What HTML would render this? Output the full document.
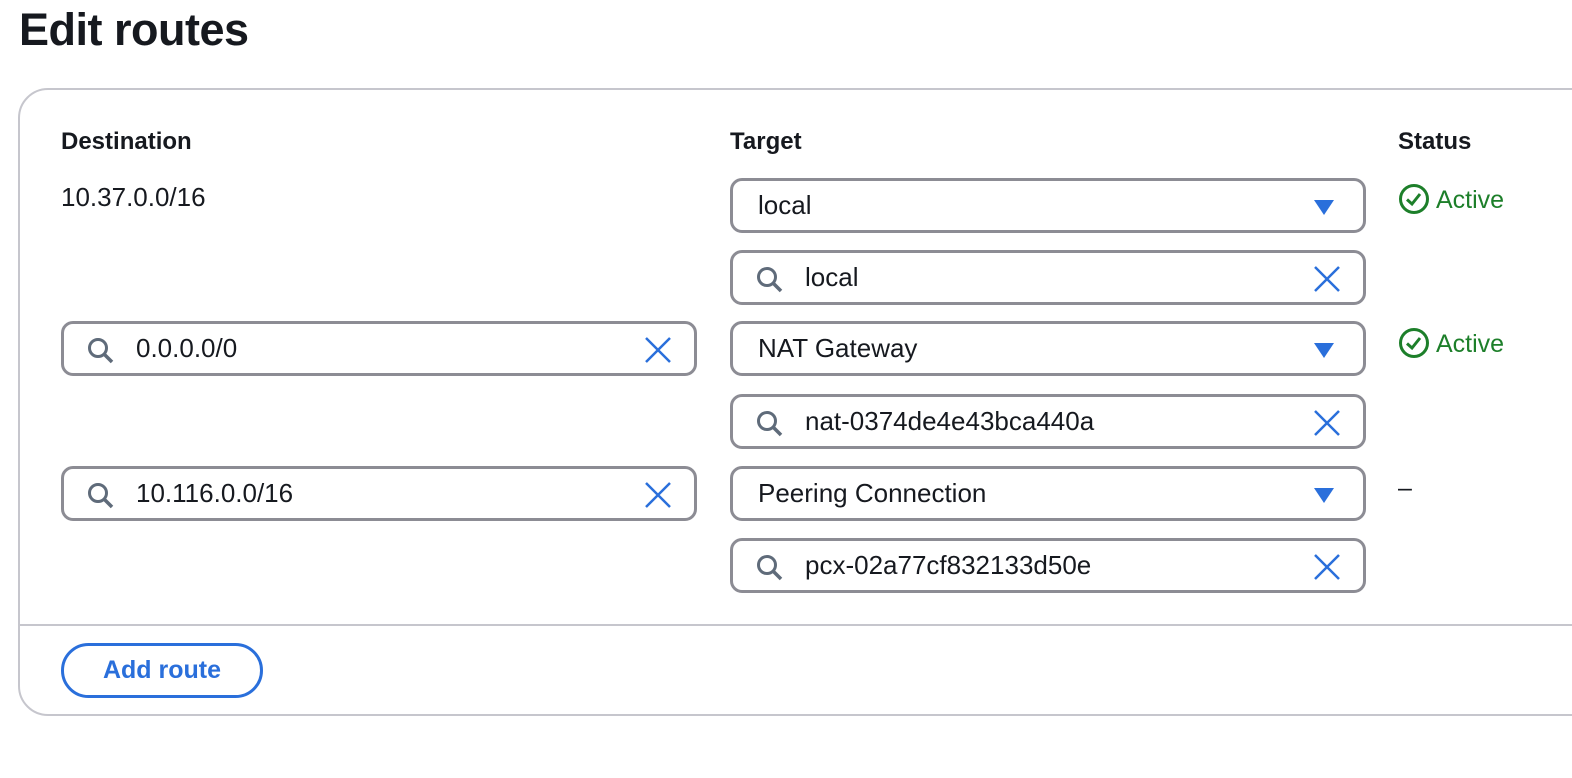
<!DOCTYPE html><html><head><style>
body{margin:0;width:1572px;height:778px;background:#fff;font-family:"Liberation Sans",sans-serif;color:#16191f;position:relative;overflow:hidden}
.a{position:absolute}
h1{position:absolute;left:19px;top:4px;margin:0;font-size:45px;font-weight:bold;letter-spacing:-0.5px}
.card{left:18px;top:88px;width:1600px;height:628px;border:2px solid #c6c6cd;border-radius:30px;box-sizing:border-box}
.div{left:19px;top:624px;width:1560px;height:2px;background:#c6c6cd}
.hd{font-size:24px;font-weight:bold;top:128px}
.in{position:absolute;height:55px;width:636px;border:3px solid #8c8c94;border-radius:12px;box-sizing:border-box;font-size:26px;line-height:49px}
.in span{position:absolute;left:25px}
.in.s span{left:72px}
.in svg{position:absolute}
.st{font-size:25px;color:#1d7f2a;left:1398px}
.btn{left:61px;top:643px;width:202px;height:55px;border:3px solid #2a6fdb;border-radius:28px;box-sizing:border-box;color:#2a6fdb;font-weight:bold;font-size:25px;text-align:center;line-height:49px}
</style></head><body>
<h1>Edit routes</h1>
<div class="a card"></div>
<div class="a div"></div>
<div class="a hd" style="left:61px">Destination</div>
<div class="a hd" style="left:730px">Target</div>
<div class="a hd" style="left:1398px">Status</div>
<div class="a" style="left:61px;top:182px;font-size:26px">10.37.0.0/16</div>

<div class="in" style="left:730px;top:178px"><span>local</span><svg style="left:580px;top:17px" width="22" height="18"><path d="M1 2H21L11 17Z" fill="#2a6fdb"/></svg></div>
<div class="in s" style="left:730px;top:250px"><svg style="left:22px;top:12px" width="30" height="30"><circle cx="12" cy="12" r="8.5" fill="none" stroke="#5f6b7a" stroke-width="3"/><path d="M18 18L26 26" stroke="#5f6b7a" stroke-width="3.5"/></svg><span>local</span><svg style="left:580px;top:12px" width="28" height="28"><path d="M2 2L26 26M26 2L2 26" stroke="#2a6fdb" stroke-width="2.5"/></svg></div>

<div class="in s" style="left:61px;top:321px"><svg style="left:22px;top:12px" width="30" height="30"><circle cx="12" cy="12" r="8.5" fill="none" stroke="#5f6b7a" stroke-width="3"/><path d="M18 18L26 26" stroke="#5f6b7a" stroke-width="3.5"/></svg><span>0.0.0.0/0</span><svg style="left:580px;top:12px" width="28" height="28"><path d="M2 2L26 26M26 2L2 26" stroke="#2a6fdb" stroke-width="2.5"/></svg></div>
<div class="in" style="left:730px;top:321px"><span>NAT Gateway</span><svg style="left:580px;top:17px" width="22" height="18"><path d="M1 2H21L11 17Z" fill="#2a6fdb"/></svg></div>
<div class="in s" style="left:730px;top:394px"><svg style="left:22px;top:12px" width="30" height="30"><circle cx="12" cy="12" r="8.5" fill="none" stroke="#5f6b7a" stroke-width="3"/><path d="M18 18L26 26" stroke="#5f6b7a" stroke-width="3.5"/></svg><span>nat-0374de4e43bca440a</span><svg style="left:580px;top:12px" width="28" height="28"><path d="M2 2L26 26M26 2L2 26" stroke="#2a6fdb" stroke-width="2.5"/></svg></div>

<div class="in s" style="left:61px;top:466px"><svg style="left:22px;top:12px" width="30" height="30"><circle cx="12" cy="12" r="8.5" fill="none" stroke="#5f6b7a" stroke-width="3"/><path d="M18 18L26 26" stroke="#5f6b7a" stroke-width="3.5"/></svg><span>10.116.0.0/16</span><svg style="left:580px;top:12px" width="28" height="28"><path d="M2 2L26 26M26 2L2 26" stroke="#2a6fdb" stroke-width="2.5"/></svg></div>
<div class="in" style="left:730px;top:466px"><span>Peering Connection</span><svg style="left:580px;top:17px" width="22" height="18"><path d="M1 2H21L11 17Z" fill="#2a6fdb"/></svg></div>
<div class="in s" style="left:730px;top:538px"><svg style="left:22px;top:12px" width="30" height="30"><circle cx="12" cy="12" r="8.5" fill="none" stroke="#5f6b7a" stroke-width="3"/><path d="M18 18L26 26" stroke="#5f6b7a" stroke-width="3.5"/></svg><span>pcx-02a77cf832133d50e</span><svg style="left:580px;top:12px" width="28" height="28"><path d="M2 2L26 26M26 2L2 26" stroke="#2a6fdb" stroke-width="2.5"/></svg></div>

<div class="a st" style="top:183px"><svg width="32" height="32" style="vertical-align:-7px;margin-right:6px"><circle cx="16" cy="16" r="13.5" fill="none" stroke="#1d7f2a" stroke-width="3"/><path d="M9 16.5L14 21L22 11" fill="none" stroke="#1d7f2a" stroke-width="3"/></svg>Active</div>
<div class="a st" style="top:327px"><svg width="32" height="32" style="vertical-align:-7px;margin-right:6px"><circle cx="16" cy="16" r="13.5" fill="none" stroke="#1d7f2a" stroke-width="3"/><path d="M9 16.5L14 21L22 11" fill="none" stroke="#1d7f2a" stroke-width="3"/></svg>Active</div>
<div class="a" style="left:1398px;top:474px;font-size:25px">–</div>

<div class="a btn">Add route</div>
</body></html>
